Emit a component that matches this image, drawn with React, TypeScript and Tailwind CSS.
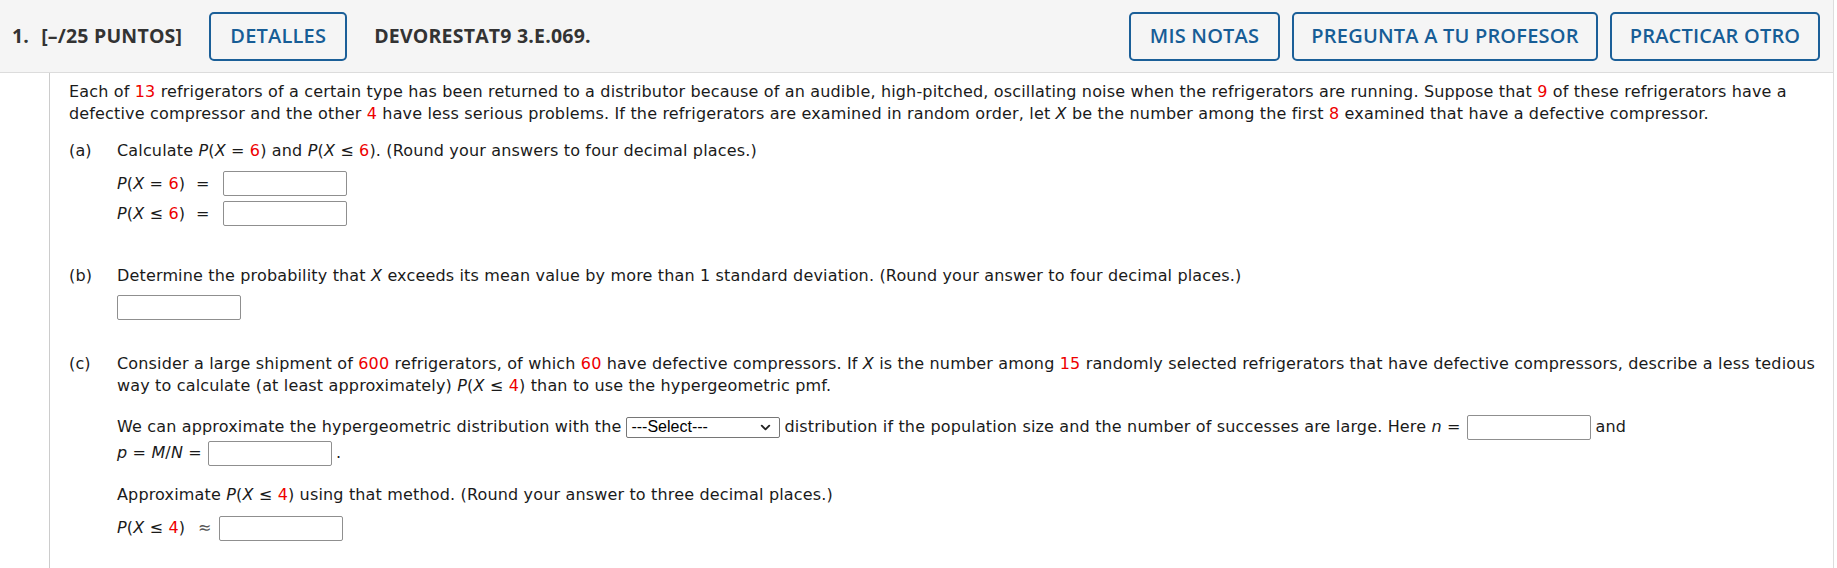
import React from "react";
import { ChevronDown } from "lucide-react";

const R = ({ children }: { children: React.ReactNode }) => (
  <span className="text-[#ee0000]">{children}</span>
);
const I = ({ children }: { children: React.ReactNode }) => (
  <i className="italic">{children}</i>
);
const Box = () => (
  <span className="inline-block align-middle w-[124px] h-[25px] border border-[#8f8f8f] rounded-[2px] bg-white" />
);

const HBtn = ({ label, w }: { label: string; w: string }) => (
  <div
    className={`${w} h-[49px] flex items-center justify-center border-2 border-[#1b5f98] rounded-[5px] text-[#175d96] text-[20px] tracking-[0.2px] font-semibold`}
  >
    {label}
  </div>
);

export default function App() {
  return (
    <div className="w-[1834px] min-h-[568px] border-r border-[#dddddd] bg-white">
      <div className="h-[73px] bg-[#f5f5f5] border-b border-[#dcdcdc] flex items-center pl-[12px] pr-[13px] font-['Open_Sans',sans-serif] text-[#333333]">
        <span className="text-[19.5px] font-bold tracking-[0.2px]">1.</span>
        <span className="ml-[12px] text-[19.5px] font-bold tracking-[0.2px]">[–/25 PUNTOS]</span>
        <div className="ml-[27px]">
          <HBtn label="DETALLES" w="w-[138px]" />
        </div>
        <span className="ml-[27px] text-[19.5px] font-bold tracking-[0.2px]">DEVORESTAT9 3.E.069.</span>
        <div className="ml-auto flex gap-[12px]">
          <HBtn label="MIS NOTAS" w="w-[151px]" />
          <HBtn label="PREGUNTA A TU PROFESOR" w="w-[306px]" />
          <HBtn label="PRACTICAR OTRO" w="w-[210px]" />
        </div>
      </div>

      <div className="ml-[49px] min-h-[495px] border-l border-[#cccccc] pl-[19px] pr-[15px] pt-[8px] font-['DejaVu_Sans',Verdana,sans-serif] text-[16px] tracking-[0.16px] leading-[22px] text-[#1a1a1a]">
        <p className="whitespace-nowrap">
          Each of <R>13</R> refrigerators of a certain type has been returned to a distributor because of an audible, high-pitched, oscillating noise when the refrigerators are running. Suppose that <R>9</R> of these refrigerators have a
          <br />
          defective compressor and the other <R>4</R> have less serious problems. If the refrigerators are examined in random order, let <I>X</I> be the number among the first <R>8</R> examined that have a defective compressor.
        </p>

        <div className="mt-[15px] flex">
          <div className="w-[48px] shrink-0">(a)</div>
          <div>
            <p className="whitespace-nowrap">
              Calculate <I>P</I>(<I>X</I> = <R>6</R>) and <I>P</I>(<I>X</I> ≤ <R>6</R>). (Round your answers to four decimal places.)
            </p>
            <div className="mt-[9px] flex items-center h-[25px]">
              <span className="w-[79px] whitespace-nowrap"><I>P</I>(<I>X</I> = <R>6</R>)</span>
              <span className="w-[27px]">=</span>
              <Box />
            </div>
            <div className="mt-[5px] flex items-center h-[25px]">
              <span className="w-[79px] whitespace-nowrap"><I>P</I>(<I>X</I> ≤ <R>6</R>)</span>
              <span className="w-[27px]">=</span>
              <Box />
            </div>
          </div>
        </div>

        <div className="mt-[39px] flex">
          <div className="w-[48px] shrink-0">(b)</div>
          <div>
            <p className="whitespace-nowrap">
              Determine the probability that <I>X</I> exceeds its mean value by more than 1 standard deviation. (Round your answer to four decimal places.)
            </p>
            <div className="mt-[8px] h-[25px] flex">
              <Box />
            </div>
          </div>
        </div>

        <div className="mt-[33px] flex">
          <div className="w-[48px] shrink-0">(c)</div>
          <div>
            <p className="whitespace-nowrap">
              Consider a large shipment of <R>600</R> refrigerators, of which <R>60</R> have defective compressors. If <I>X</I> is the number among <R>15</R> randomly selected refrigerators that have defective compressors, describe a less tedious
              <br />
              way to calculate (at least approximately) <I>P</I>(<I>X</I> ≤ <R>4</R>) than to use the hypergeometric pmf.
            </p>
            <div className="mt-[17px] leading-[26px] whitespace-nowrap">
              <div className="flex items-center h-[26px]">
                <span>We can approximate the hypergeometric distribution with the</span>
                <span className="ml-[5px] w-[154px] h-[21px] flex items-center justify-between border border-[#767676] rounded-[2px] bg-white pl-[4px] pr-[6px] font-['Liberation_Sans',Arial,sans-serif] text-[16px] tracking-normal text-black">
                  <span>---Select---</span>
                  <ChevronDown size={15} strokeWidth={3} className="text-[#222]" />
                </span>
                <span className="ml-[4px]">distribution if the population size and the number of successes are large. Here <I>n</I> =</span>
                <span className="ml-[6px] flex"><Box /></span>
                <span className="ml-[5px]">and</span>
              </div>
              <div className="flex items-center h-[26px]">
                <span><I>p</I> = <I>M</I>/<I>N</I> =</span>
                <span className="ml-[6px] flex"><Box /></span>
                <span className="ml-[4px]">.</span>
              </div>
            </div>
            <p className="mt-[18px] whitespace-nowrap">
              Approximate <I>P</I>(<I>X</I> ≤ <R>4</R>) using that method. (Round your answer to three decimal places.)
            </p>
            <div className="mt-[9px] flex items-center h-[26px]">
              <span className="w-[81px] whitespace-nowrap"><I>P</I>(<I>X</I> ≤ <R>4</R>)</span>
              <span className="w-[21px] text-[#555]">≈</span>
              <Box />
            </div>
          </div>
        </div>
      </div>
    </div>
  );
}
